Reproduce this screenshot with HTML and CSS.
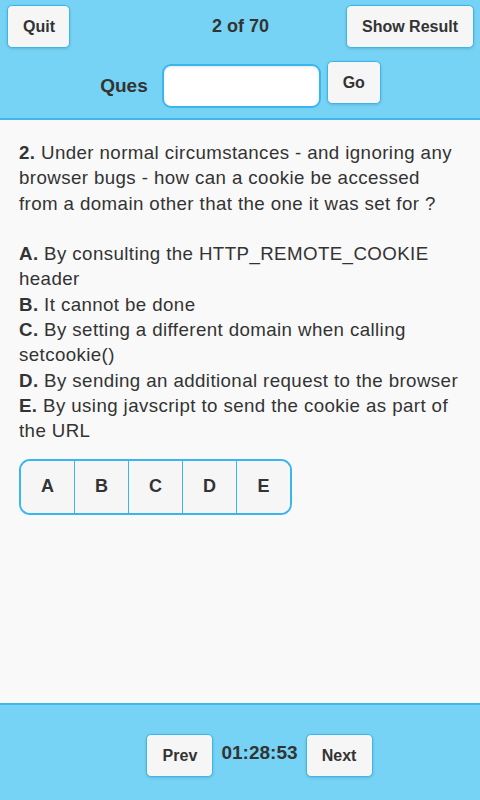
FILE: index.html
```html
<!DOCTYPE html>
<html>
<head>
<meta charset="utf-8">
<link rel="stylesheet" href="styles.css">
</head>
<body>
<div class="page">
  <header class="top">
    <div class="row1">
      <div class="left"><button class="btn">Quit</button></div>
      <div class="title">2 of 70</div>
      <div class="right"><button class="btn">Show Result</button></div>
    </div>
    <div class="row2">
      <label class="ques">Ques</label>
      <input class="qinput" type="text">
      <button class="btn go">Go</button>
    </div>
  </header>
  <main class="content">
    <p class="question"><b>2.</b> Under normal circumstances - and ignoring any browser bugs - how can a cookie be accessed from a domain other that the one it was set for ?</p>
    <div class="opt"><b>A.</b> By consulting the HTTP_REMOTE_COOKIE header</div>
    <div class="opt"><b>B.</b> It cannot be done</div>
    <div class="opt"><b>C.</b> By setting a different domain when calling setcookie()</div>
    <div class="opt"><b>D.</b> By sending an additional request to the browser</div>
    <div class="opt"><b>E.</b> By using javscript to send the cookie as part of the URL</div>
    <div class="answers">
      <button class="ans">A</button>
      <button class="ans">B</button>
      <button class="ans">C</button>
      <button class="ans">D</button>
      <button class="ans">E</button>
    </div>
  </main>
  <footer class="bottom">
    <button class="btn nav">Prev</button>
    <span class="timer">01:28:53</span>
    <button class="btn nav">Next</button>
  </footer>
</div>
</body>
</html>
```
FILE: styles.css
```css
* { box-sizing: border-box; }
html, body { margin: 0; padding: 0; }
body {
  font-family: "Liberation Sans", Arial, sans-serif;
  color: #333;
  background: #76d3f5;
}
.page {
  display: flex;
  flex-direction: column;
  height: 800px;
  width: 480px;
}
.top {
  background: #76d3f5;
  border-bottom: 2px solid #3db8ee;
  padding: 5px 6px 10px 7px;
}
.row1 {
  display: grid;
  grid-template-columns: 1fr auto 1fr;
  align-items: center;
  height: 43px;
}
.left { justify-self: start; }
.right { justify-self: end; }
.title {
  font-size: 18px;
  font-weight: bold;
  color: #333;
}
.btn {
  font-family: "Liberation Sans", Arial, sans-serif;
  font-size: 16px;
  font-weight: bold;
  color: #333;
  background: #f6f6f6;
  border: 1px solid #3ab6ee;
  border-radius: 5px;
  height: 43px;
  padding: 0 15px;
  box-shadow: 0 1px 3px rgba(0,0,0,0.15);
  cursor: pointer;
}
.row1 .btn { display: block; }
.row1 .left .btn { width: 63px; }
.row1 .right .btn { width: 128px; }
.row2 {
  display: flex;
  justify-content: center;
  align-items: flex-start;
  margin-top: 13px;
  height: 47px;
}
.ques {
  font-size: 19px;
  font-weight: bold;
  align-self: center;
  margin-right: 14px;
  margin-top: 2px;
}
.qinput {
  width: 159px;
  height: 44px;
  margin-top: 3px;
  border: 2px solid #3ab6ee;
  border-radius: 9px;
  background: #fff;
  box-shadow: inset 0 1px 3px rgba(0,0,0,0.1);
  outline: none;
}
.go {
  width: 54px;
  margin-left: 6px;
  padding: 0;
}
.content {
  flex: 1;
  background: #f9f9f9;
  padding: 20px 19px;
  font-size: 18.72px;
  letter-spacing: 0.4px;
  line-height: 25.3px;
  color: #333;
}
.question { margin: 0 0 25.3px 0; }
.opt { margin: 0; }
.answers {
  display: flex;
  width: 273px;
  height: 56px;
  margin-top: 15px;
  border: 2px solid #3ab6ee;
  border-radius: 11px;
  overflow: hidden;
  background: #f6f6f6;
  letter-spacing: 0;
}
.ans {
  flex: 1;
  border: none;
  border-right: 1px solid #3ab6ee;
  background: #f6f6f6;
  font-family: "Liberation Sans", Arial, sans-serif;
  font-size: 18px;
  font-weight: bold;
  color: #333;
  padding: 0;
}
.ans:last-child { border-right: none; }
.bottom {
  height: 97px;
  border-top: 2px solid #3db8ee;
  background: #76d3f5;
  display: flex;
  justify-content: center;
  align-items: flex-start;
  gap: 8px;
  padding: 29px 0 0 39px;
}
.nav { width: 67px; padding: 0; }
.timer {
  font-size: 19px;
  font-weight: bold;
  line-height: 38px;
  color: #333;
}
```
